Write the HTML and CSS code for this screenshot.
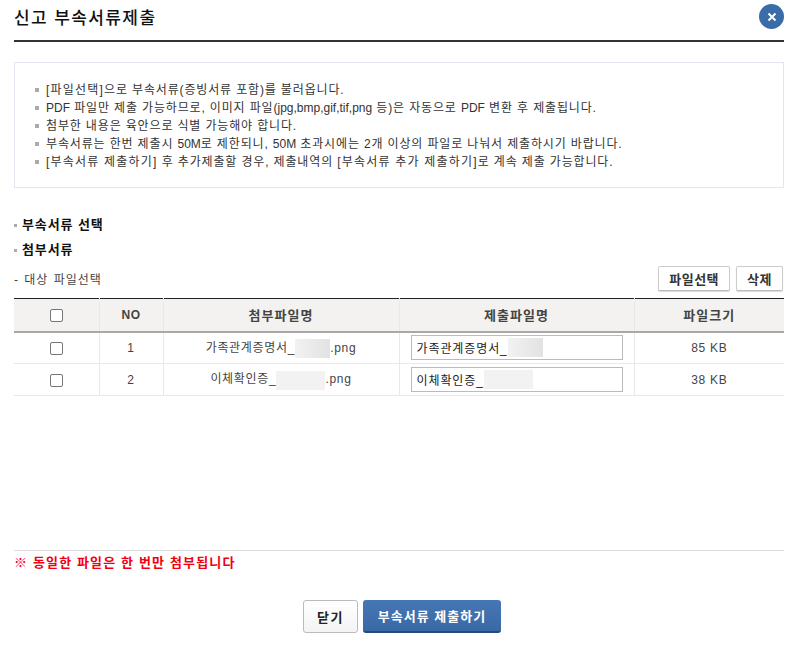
FILE: index.html
```html
<!DOCTYPE html>
<html lang="ko">
<head>
  <meta charset="UTF-8" />
  <meta name="viewport" content="width=device-width, initial-scale=1.0"/>
  <title>신고 부속서류제출</title>
  <link rel="stylesheet" href="styles.css">
</head>
<body>
  <div class="popup">
    <header class="popup-head">
      <h1>신고 부속서류제출</h1>
      <button type="button" class="close-btn" aria-label="닫기">
        <svg width="10" height="10" viewBox="0 0 10 10"><path d="M1.5 1.5l7 7M8.5 1.5l-7 7" stroke="#fff" stroke-width="2" fill="none"/></svg>
      </button>
    </header>

    <ul class="notice">
      <li><span class="tag">[파일선택]</span>으로 부속서류(증빙서류 포함)를 불러옵니다.</li>
      <li><span class="en">PDF</span> 파일만 제출 가능하므로, 이미지 파일<span class="en">(jpg,bmp,gif,tif,png</span> 등)은 자동으로 <span class="en">PDF</span> 변환 후 제출됩니다.</li>
      <li>첨부한 내용은 육안으로 식별 가능해야 합니다.</li>
      <li>부속서류는 한번 제출시 <span class="en">50M</span>로 제한되니, <span class="en">50M</span> 초과시에는 2개 이상의 파일로 나눠서 제출하시기 바랍니다.</li>
      <li><span class="tag">[부속서류 제출하기]</span> 후 추가제출할 경우, 제출내역의 <span class="tag">[부속서류 추가 제출하기]</span>로 계속 제출 가능합니다.</li>
    </ul>

    <h2 class="sec-title first">부속서류 선택</h2>
    <h2 class="sec-title">첨부서류</h2>

    <div class="file-bar">
      <span class="file-label">- 대상 파일선택</span>
      <div class="file-actions">
        <button type="button" class="btn-small">파일선택</button>
        <button type="button" class="btn-small">삭제</button>
      </div>
    </div>

    <table class="file-table">
      <colgroup>
        <col class="col-check"><col class="col-no"><col class="col-name"><col class="col-submit"><col>
      </colgroup>
      <thead>
        <tr>
          <th><span class="check"></span></th>
          <th class="th-no">NO</th>
          <th>첨부파일명</th>
          <th>제출파일명</th>
          <th>파일크기</th>
        </tr>
      </thead>
      <tbody>
        <tr>
          <td><span class="check"></span></td>
          <td>1</td>
          <td>가족관계증명서_<span class="blur blur-a"></span>.png</td>
          <td><div class="name-input">가족관계증명서_<span class="blur blur-a"></span></div></td>
          <td>85 KB</td>
        </tr>
        <tr>
          <td><span class="check"></span></td>
          <td>2</td>
          <td>이체확인증_<span class="blur blur-b"></span>.png</td>
          <td><div class="name-input">이체확인증_<span class="blur blur-b"></span></div></td>
          <td>38 KB</td>
        </tr>
      </tbody>
    </table>

    <p class="warning">※ 동일한 파일은 한 번만 첨부됩니다</p>

    <div class="popup-foot">
      <button type="button" class="btn-close">닫기</button>
      <button type="button" class="btn-submit">부속서류 제출하기</button>
    </div>
  </div>
</body>
</html>
```

FILE: styles.css
```css
* {
  box-sizing: border-box;
}

body {
  margin: 0;
  background: #fff;
  color: #333;
  font-family: "Liberation Sans", "Noto Sans CJK KR", sans-serif;
  font-size: 12px;
}

button {
  font-family: inherit;
  cursor: pointer;
}

.popup {
  width: 770px;
  margin-left: 14px;
}

.popup-head {
  display: flex;
  justify-content: space-between;
  align-items: flex-start;
  height: 42px;
  border-bottom: 2px solid #333;
}

.popup-head h1 {
  margin: 6px 0 0;
  font-size: 17px;
  line-height: 26px;
  font-weight: 500;
  letter-spacing: 1.4px;
  color: #111;
}

.close-btn {
  display: flex;
  align-items: center;
  justify-content: center;
  width: 25px;
  height: 25px;
  margin-top: 4px;
  padding: 0;
  border: 0;
  border-radius: 50%;
  background: #3a6ca8;
}

.notice {
  height: 126px;
  margin: 20px 0 0;
  padding: 18px 18px 0;
  border: 1px solid #e2e7ef;
  list-style: none;
}

.notice li {
  position: relative;
  padding-left: 13px;
  font-size: 12px;
  line-height: 18px;
  letter-spacing: 0.85px;
  color: #333;
}

.notice .en {
  letter-spacing: 0;
}

.notice .tag {
  letter-spacing: 1.2px;
}

.notice li::before {
  content: "";
  position: absolute;
  left: 2px;
  top: 7px;
  width: 4px;
  height: 4px;
  background: #aaa;
}

.sec-title {
  position: relative;
  margin: 7px 0 0;
  padding-left: 8px;
  font-size: 13px;
  line-height: 18px;
  font-weight: 700;
  letter-spacing: 0.9px;
  color: #111;
}

.sec-title.first {
  margin-top: 28px;
}

.sec-title::before {
  content: "";
  position: absolute;
  left: 0;
  top: 8px;
  width: 3px;
  height: 3px;
  background: #aaa;
}

.file-bar {
  display: flex;
  justify-content: space-between;
  align-items: center;
  height: 26px;
  margin-top: 6px;
}

.file-label {
  letter-spacing: 1px;
  word-spacing: 1px;
  color: #444;
}

.file-actions {
  display: flex;
  gap: 6px;
  margin: 1px 1px 0 0;
}

.btn-small {
  height: 25px;
  padding: 0 10px;
  background: #fff;
  border: 1px solid #ccc;
  border-bottom-color: #bbb;
  border-radius: 2px;
  box-shadow: 0 1px 1px rgba(0, 0, 0, 0.15);
  font-size: 13px;
  font-weight: 700;
  letter-spacing: 0.5px;
  color: #333;
}

.file-table {
  width: 770px;
  margin-top: 7px;
  border-collapse: collapse;
  table-layout: fixed;
  border-top: 1px solid #222;
}

.col-check { width: 85px; }
.col-no { width: 64px; }
.col-name { width: 236px; }
.col-submit { width: 235px; }

.file-table th {
  height: 33px;
  padding: 0;
  background: #f3f2f0;
  border-left: 1px solid #e8e8e8;
  border-bottom: 2px solid #a8a8a8;
  font-size: 13px;
  font-weight: 700;
  letter-spacing: 1px;
  color: #444;
  text-align: center;
}

.file-table .th-no {
  font-size: 12px;
  letter-spacing: 0.5px;
}

.file-table td {
  height: 32px;
  padding: 0;
  border-left: 1px solid #e8e8e8;
  border-bottom: 1px solid #e8e8e8;
  letter-spacing: 0.7px;
  color: #444;
  text-align: center;
}

.file-table th:first-child,
.file-table td:first-child {
  border-left: 0;
}

.check {
  display: inline-block;
  width: 13px;
  height: 13px;
  border: 1px solid #767676;
  border-radius: 2px;
  background: #fff;
  vertical-align: middle;
}

.name-input {
  display: flex;
  align-items: center;
  width: 212px;
  height: 25px;
  margin-left: 11px;
  padding-left: 5px;
  border: 1px solid #bbb;
  letter-spacing: 0.9px;
  color: #222;
  text-align: left;
}

.blur {
  display: inline-block;
  height: 19px;
  vertical-align: middle;
}

.blur-a {
  width: 35px;
  background: linear-gradient(90deg, #f2f2f2, #e2e2e2);
}

.blur-b {
  width: 49px;
  background: #f2f2f2;
}

.warning {
  margin: 154px 0 0;
  padding-top: 3px;
  border-top: 1px solid #ddd;
  font-size: 13px;
  line-height: 18px;
  font-weight: 700;
  letter-spacing: 1.15px;
  color: #f00012;
}

.popup-foot {
  display: flex;
  justify-content: center;
  gap: 5px;
  margin-top: 28px;
  padding-left: 6px;
}

.btn-close {
  width: 55px;
  height: 33px;
  padding: 0;
  background: linear-gradient(#fff, #f3f3f3);
  border: 1px solid #bbb;
  border-radius: 3px;
  font-size: 13px;
  font-weight: 700;
  letter-spacing: 1.5px;
  color: #222;
}

.btn-submit {
  width: 138px;
  height: 33px;
  padding: 0;
  background: linear-gradient(#4577b4, #3a69a5);
  border: 0;
  border-bottom: 2px solid #24497c;
  border-radius: 3px;
  font-size: 13px;
  font-weight: 700;
  letter-spacing: 1px;
  color: #fff;
}
```
